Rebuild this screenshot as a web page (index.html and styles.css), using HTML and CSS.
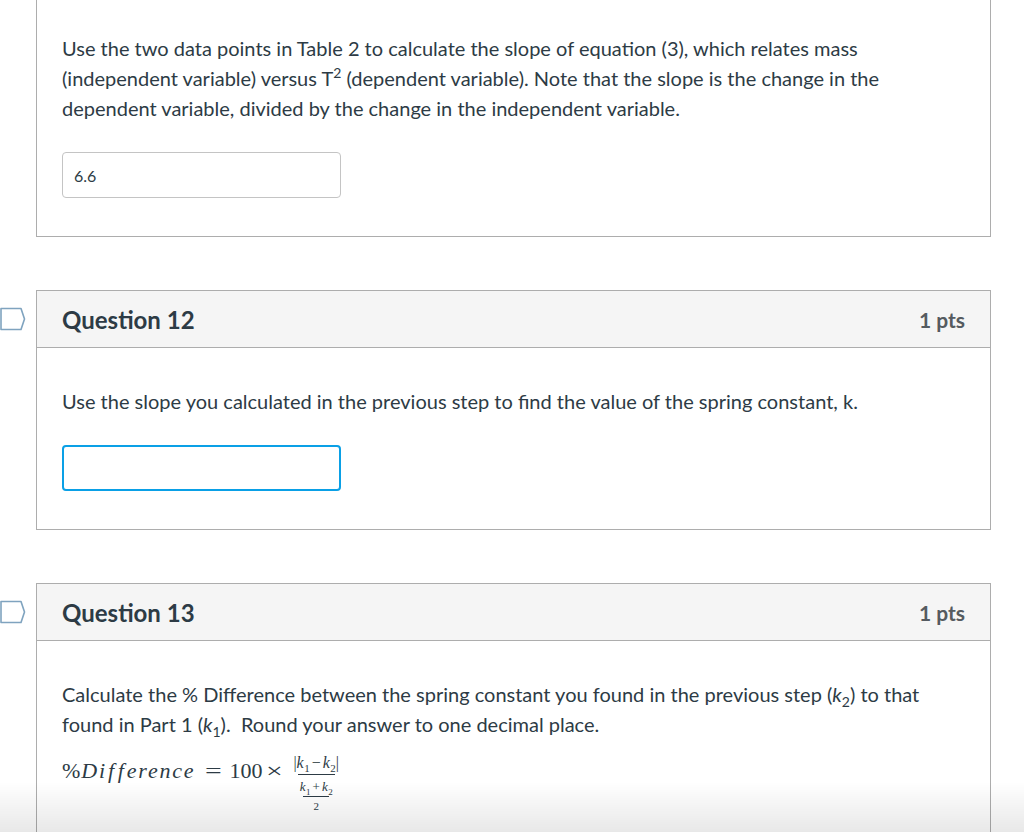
FILE: index.html
```html
<!DOCTYPE html>
<html lang="en">
<head>
<meta charset="utf-8">
<title>Quiz</title>
<link rel="stylesheet" href="styles.css">
</head>
<body>
<main class="quiz">
  <section class="question question--cut">
    <div class="flag-col"></div>
    <div class="card">
      <div class="card-body">
        <p class="text">Use the two data points in Table 2 to calculate the slope of equation (3), which relates mass (independent variable) versus T<sup>2</sup> (dependent variable). Note that the slope is the change in the dependent variable, divided by the change in the independent variable.</p>
        <div class="answer">6.6</div>
      </div>
    </div>
  </section>

  <section class="question">
    <div class="flag-col">
      <svg class="flag" width="26" height="24" viewBox="0 0 26 24" aria-hidden="true"><path d="M1 1.5 H21 L24.5 12 L21 22.5 H1 Z" fill="none" stroke="#7fa3bf" stroke-width="1.6" stroke-linejoin="round"/></svg>
    </div>
    <div class="card">
      <header class="card-head">
        <h2 class="q-title">Question 12</h2>
        <span class="q-pts">1 pts</span>
      </header>
      <div class="card-body">
        <p class="text">Use the slope you calculated in the previous step to find the value of the spring constant, k.</p>
        <div class="answer answer--focus"></div>
      </div>
    </div>
  </section>

  <section class="question">
    <div class="flag-col">
      <svg class="flag" width="26" height="24" viewBox="0 0 26 24" aria-hidden="true"><path d="M1 1.5 H21 L24.5 12 L21 22.5 H1 Z" fill="none" stroke="#7fa3bf" stroke-width="1.6" stroke-linejoin="round"/></svg>
    </div>
    <div class="card">
      <header class="card-head">
        <h2 class="q-title">Question 13</h2>
        <span class="q-pts">1 pts</span>
      </header>
      <div class="card-body">
        <p class="text">Calculate the % Difference between the spring constant you found in the previous step (<i>k</i><sub>2</sub>) to that found in Part 1 (<i>k</i><sub>1</sub>).&nbsp; Round your answer to one decimal place.</p>
        <p class="formula"><span class="m-main m-pct">%</span><span class="m-main m-it">Di<span class="m-f">f</span><span class="m-f">f</span>erence</span><span class="m-main m-eq">=</span><span class="m-main">100</span><span class="m-main m-times">×</span><span class="frac"><span class="frac-num"><span class="m-up">|</span><span class="m-it">k</span><sub>1</sub><span class="m-bin">−</span><span class="m-it">k</span><sub>2</sub><span class="m-up">|</span></span><span class="frac-den"><span class="frac frac--inner"><span class="frac-num"><span class="m-it">k</span><sub>1</sub><span class="m-bin">+</span><span class="m-it">k</span><sub>2</sub></span><span class="frac-den">2</span></span></span></span></p>
      </div>
    </div>
  </section>
</main>
<div class="fade"></div>
</body>
</html>
```

FILE: styles.css
```css
html, body {
  margin: 0;
  padding: 0;
  background: #ffffff;
}

body {
  font-family: Lato, "Open Sans", "Liberation Sans", sans-serif;
  color: #2d3b45;
  overflow: hidden;
}

.quiz {
  display: flex;
  flex-direction: column;
  gap: 53px;
  width: 991px;
}

.question {
  display: flex;
  align-items: flex-start;
}

.question--cut {
  margin-top: -5px;
}

.question--cut .card {
  border-top: none;
}

.flag-col {
  width: 36px;
  flex: none;
  padding-top: 17px;
}

.flag {
  display: block;
}

.card {
  flex: 1;
  border: 1px solid #adadad;
  background: #fff;
}

.card-head {
  height: 56px;
  display: flex;
  align-items: center;
  justify-content: space-between;
  padding: 0 25px;
  background: #f5f5f5;
  border-bottom: 1px solid #adadad;
}

.q-title {
  margin: 0;
  font-size: 24px;
  font-weight: 700;
  color: #2d3b45;
}

.q-pts {
  font-size: 21px;
  font-weight: 700;
  color: #555b60;
}

.card-body {
  padding: 38px 25px 38px;
}

.text {
  margin: 0;
  font-size: 20px;
  line-height: 30px;
}

.text sup,
.text sub {
  font-size: 14px;
  line-height: 0;
}

.answer {
  box-sizing: border-box;
  width: 279px;
  height: 46px;
  margin-top: 29px;
  padding: 0 11px;
  border: 1px solid #c4c4c4;
  border-radius: 4px;
  font-size: 16px;
  line-height: 46px;
  color: #2d3b45;
}

.answer--focus {
  border: 2px solid #0aa0e6;
}

/* formula */
.formula {
  margin: 0;
  padding-top: 16px;
  height: 70px;
  display: flex;
  align-items: flex-start;
  font-family: "Liberation Serif", "DejaVu Serif", serif;
  color: #2d3b45;
}

.m-main {
  font-size: 22px;
  line-height: 26px;
  margin-top: 3px;
}

.m-up {
  font-style: normal;
}

.m-it {
  font-style: italic;
  letter-spacing: 1.8px;
}

.m-pct {
  margin-right: 1px;
}

.m-f {
  margin: 0 1px;
}

.m-eq {
  display: inline-block;
  width: 17px;
  text-align: center;
  margin: 3px 7px 0 10px;
  transform: scaleX(1.35);
}

.m-times {
  display: inline-block;
  width: 17px;
  text-align: center;
  margin: 3px 9px 0 4px;
  transform: scaleX(1.35);
}

.m-bin {
  margin: 0 2px;
}

.frac {
  display: inline-flex;
  flex-direction: column;
  align-items: center;
  font-size: 16px;
}

.frac .m-it {
  letter-spacing: 0.5px;
}

.frac-num {
  padding: 0 1px 3px;
  line-height: 16px;
}

.frac-den {
  border-top: 1px solid #2d3b45;
  padding-top: 4px;
  line-height: 14px;
}

.frac sub {
  font-size: 11px;
  line-height: 0;
}

.frac--inner {
  font-size: 13px;
}

.frac--inner .frac-num {
  line-height: 12px;
  padding: 0 2px 3px;
}

.frac--inner .frac-den {
  font-size: 11px;
  line-height: 12px;
  padding: 3px 10px 0;
}

.frac--inner sub {
  font-size: 9px;
}

.fade {
  position: fixed;
  left: 0;
  right: 0;
  bottom: 0;
  height: 50px;
  background: linear-gradient(to bottom, rgba(0, 0, 0, 0), rgba(0, 0, 0, 0.09));
  pointer-events: none;
}
```
